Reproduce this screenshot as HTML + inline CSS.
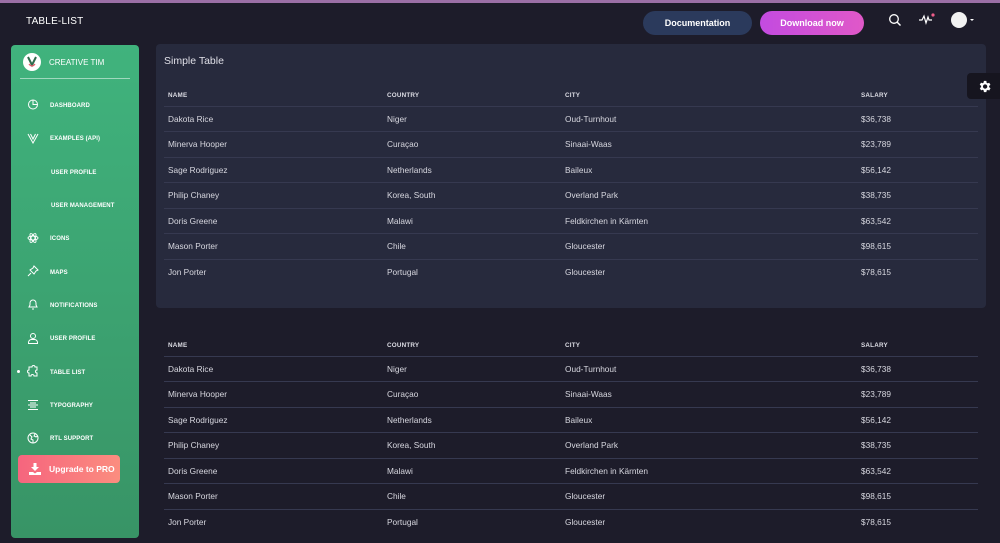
<!DOCTYPE html>
<html><head><meta charset="utf-8"><style>
*{margin:0;padding:0;box-sizing:border-box}
body{width:1000px;height:543px;overflow:hidden;background:#1d1c2a;font-family:"Liberation Sans",sans-serif;position:relative;color:#fff}
.topline{position:absolute;left:0;top:0;width:1000px;height:3px;background:#9b6fa6}
.brand{position:absolute;left:26px;top:16px;font-size:10px;color:#fff;letter-spacing:.2px}
.btn{position:absolute;top:11px;height:24px;border-radius:12px;font-size:9px;font-weight:bold;color:#fff;text-align:center;line-height:24px}
.sidebar{position:absolute;left:11px;top:45px;width:128px;height:493px;border-radius:4px;background:linear-gradient(180deg,#40b37d,#389466);}
.logo{position:absolute;left:12px;top:8px;width:18px;height:18px;border-radius:50%;background:#fff}
.logotxt{position:absolute;left:38px;top:13px;font-size:8px;color:#fff}
.sep{position:absolute;left:9px;right:9px;top:33px;height:1px;background:rgba(255,255,255,.5)}
.nav{position:absolute;left:39px;font-size:6px;font-weight:bold;color:#fff;letter-spacing:.1px;margin-top:2px}
.ic{position:absolute;left:16px;width:12px;height:12px}
.up{position:absolute;left:7px;top:410px;width:102px;height:28px;border-radius:4px;background:linear-gradient(90deg,#f6657e,#fb8d7f);font-size:8.5px;font-weight:bold;line-height:28px;padding-left:31px;white-space:nowrap}
.card{position:absolute;left:156px;top:44px;width:830px;height:264px;border-radius:4px;background:#272a3d}
.ttl{position:absolute;left:164px;top:55px;font-size:10.5px;color:#e0e0e8}
table{position:absolute;left:164px;width:814px;border-collapse:collapse;font-size:8.3px;color:#d8d8e0}
td,th{text-align:left;padding-left:4px;border-bottom:1px solid #363950}
th{font-size:6.3px;font-weight:bold;height:24px;color:#dcdce4;letter-spacing:.2px;padding-top:3px}
td{height:25.5px}
.gear{position:absolute;left:967px;top:73px;width:33px;height:26px;background:#16151f;border-radius:4px 0 0 4px}
</style></head><body>
<div class="topline"></div>
<div class="brand">TABLE-LIST</div>
<div class="btn" style="left:643px;width:109px;background:#2b3a5c">Documentation</div>
<div class="btn" style="left:760px;width:104px;background:linear-gradient(90deg,#c34be0,#e058c8)">Download now</div>
<svg style="position:absolute;left:888px;top:13px" width="14" height="14" viewBox="0 0 14 14"><circle cx="6" cy="6" r="4.3" fill="none" stroke="#fff" stroke-width="1.3"/><path d="M9 9l3.5 3.5" stroke="#fff" stroke-width="1.4"/></svg>
<svg style="position:absolute;left:918px;top:12px" width="18" height="14" viewBox="0 0 18 14"><path d="M1 8h3l2-4 2 7 2-6 1 3h3" fill="none" stroke="#fff" stroke-width="1.2"/><circle cx="15" cy="3" r="1.6" fill="#ef5d8a"/></svg>
<div style="position:absolute;left:951px;top:12px;width:16px;height:16px;border-radius:50%;background:#f2f2f2"></div>
<div style="position:absolute;left:970px;top:19px;border:2.5px solid transparent;border-top-color:#fff"></div>

<div class="sidebar">
<div class="logo"><svg width="18" height="18" viewBox="0 0 18 18"><path d="M5 4l4 8 4-8" fill="none" stroke="#2f6b4d" stroke-width="2"/><path d="M6 11q3 4 6 0" fill="none" stroke="#e35b6a" stroke-width="1.2"/></svg></div>
<div class="logotxt">CREATIVE TIM</div><div class="sep"></div>
<svg class="ic" style="top:53px" viewBox="0 0 12 12" fill="none" stroke="#fff" stroke-width="1"><circle cx="6" cy="6.5" r="4.5"/><path d="M6 2v4.5h4.5"/></svg><div class="nav" style="top:56px">DASHBOARD</div>
<svg class="ic" style="top:87px" viewBox="0 0 12 12" fill="none" stroke="#fff" stroke-width="1"><path d="M1 2l5 9 5-9M3.5 2l2.5 5 2.5-5"/></svg><div class="nav" style="top:89px">EXAMPLES (API)</div>
<div class="nav" style="top:123px;left:40px">USER PROFILE</div>
<div class="nav" style="top:156px;left:40px">USER MANAGEMENT</div>
<svg class="ic" style="top:187px" viewBox="0 0 12 12" fill="none" stroke="#fff" stroke-width=".9"><ellipse cx="6" cy="6" rx="5" ry="2"/><ellipse cx="6" cy="6" rx="5" ry="2" transform="rotate(60 6 6)"/><ellipse cx="6" cy="6" rx="5" ry="2" transform="rotate(-60 6 6)"/></svg><div class="nav" style="top:189px">ICONS</div>
<svg class="ic" style="top:220px" viewBox="0 0 12 12" fill="none" stroke="#fff" stroke-width="1"><path d="M7 1l4 4-2 1-2 3-4-4 3-2zM4 8l-3 3"/></svg><div class="nav" style="top:223px">MAPS</div>
<svg class="ic" style="top:253px" viewBox="0 0 12 12" fill="none" stroke="#fff" stroke-width="1"><path d="M2 9h8l-1-2V5a3 3 0 0 0-6 0v2zM5 11h2"/></svg><div class="nav" style="top:256px">NOTIFICATIONS</div>
<svg class="ic" style="top:287px" viewBox="0 0 12 12" fill="none" stroke="#fff" stroke-width="1"><circle cx="6" cy="4" r="2.5"/><path d="M1.5 11.5v-1a3 3 0 0 1 3-3h3a3 3 0 0 1 3 3v1z"/></svg><div class="nav" style="top:289px">USER PROFILE</div>
<div style="position:absolute;left:6px;top:325px;width:3px;height:3px;border-radius:50%;background:#fff"></div>
<svg class="ic" style="top:320px" viewBox="0 0 12 12" fill="none" stroke="#fff" stroke-width="1"><path d="M2 2h3a1.5 1.5 0 0 1 3 0h2v3a1.5 1.5 0 0 0 0 3v3H7a1.5 1.5 0 0 0-3 0H2V8a1.5 1.5 0 0 1 0-3z"/></svg><div class="nav" style="top:323px">TABLE LIST</div>
<svg class="ic" style="top:354px" viewBox="0 0 12 12" fill="none" stroke="#fff" stroke-width=".9"><path d="M1 1.5h10M3 4h6M1 6h10M3 8h6M1 10.5h10"/></svg><div class="nav" style="top:356px">TYPOGRAPHY</div>
<svg class="ic" style="top:387px" viewBox="0 0 12 12" fill="none" stroke="#fff" stroke-width="1"><circle cx="6" cy="6" r="5"/><path d="M3 3l2 2-1 2 2 1v3M8 2l-1 2 2 1 2-1"/></svg><div class="nav" style="top:389px">RTL SUPPORT</div>
<div class="up"><svg style="position:absolute;left:11px;top:8px" width="12" height="12" viewBox="0 0 12 12" fill="#fff"><path d="M4.5 0h3v4h2.5L6 8 2 4h2.5zM0 9h4l2 1.5L8 9h4v3H0z"/></svg>Upgrade to PRO</div>
</div>

<div class="card"></div>
<div class="ttl">Simple Table</div>
<table style="top:82px"><tr><th style="width:219px">NAME</th><th style="width:178px">COUNTRY</th><th style="width:296px">CITY</th><th>SALARY</th></tr>
<tr><td>Dakota Rice</td><td>Niger</td><td>Oud-Turnhout</td><td>$36,738</td></tr>
<tr><td>Minerva Hooper</td><td>Curaçao</td><td>Sinaai-Waas</td><td>$23,789</td></tr>
<tr><td>Sage Rodriguez</td><td>Netherlands</td><td>Baileux</td><td>$56,142</td></tr>
<tr><td>Philip Chaney</td><td>Korea, South</td><td>Overland Park</td><td>$38,735</td></tr>
<tr><td>Doris Greene</td><td>Malawi</td><td>Feldkirchen in Kärnten</td><td>$63,542</td></tr>
<tr><td>Mason Porter</td><td>Chile</td><td>Gloucester</td><td>$98,615</td></tr>
<tr><td style="border:0">Jon Porter</td><td style="border:0">Portugal</td><td style="border:0">Gloucester</td><td style="border:0">$78,615</td></tr></table>
<table style="top:332px"><tr><th style="width:219px">NAME</th><th style="width:178px">COUNTRY</th><th style="width:296px">CITY</th><th>SALARY</th></tr>
<tr><td>Dakota Rice</td><td>Niger</td><td>Oud-Turnhout</td><td>$36,738</td></tr>
<tr><td>Minerva Hooper</td><td>Curaçao</td><td>Sinaai-Waas</td><td>$23,789</td></tr>
<tr><td>Sage Rodriguez</td><td>Netherlands</td><td>Baileux</td><td>$56,142</td></tr>
<tr><td>Philip Chaney</td><td>Korea, South</td><td>Overland Park</td><td>$38,735</td></tr>
<tr><td>Doris Greene</td><td>Malawi</td><td>Feldkirchen in Kärnten</td><td>$63,542</td></tr>
<tr><td>Mason Porter</td><td>Chile</td><td>Gloucester</td><td>$98,615</td></tr>
<tr><td style="border:0">Jon Porter</td><td style="border:0">Portugal</td><td style="border:0">Gloucester</td><td style="border:0">$78,615</td></tr></table>

<div class="gear"><svg style="position:absolute;left:10px;top:6px" width="15" height="15" viewBox="0 0 24 24"><path fill="#fff" d="M19.4 13a7.5 7.5 0 0 0 0-2l2.1-1.6-2-3.5-2.5 1a7.6 7.6 0 0 0-1.7-1L15 3h-4l-.4 2.7a7.6 7.6 0 0 0-1.7 1l-2.5-1-2 3.5L6.6 11a7.5 7.5 0 0 0 0 2l-2.1 1.6 2 3.5 2.5-1a7.6 7.6 0 0 0 1.7 1L11 21h4l.4-2.7a7.6 7.6 0 0 0 1.7-1l2.5 1 2-3.5zM13 15.5a3.5 3.5 0 1 1 0-7 3.5 3.5 0 0 1 0 7z"/></svg></div>
</body></html>
